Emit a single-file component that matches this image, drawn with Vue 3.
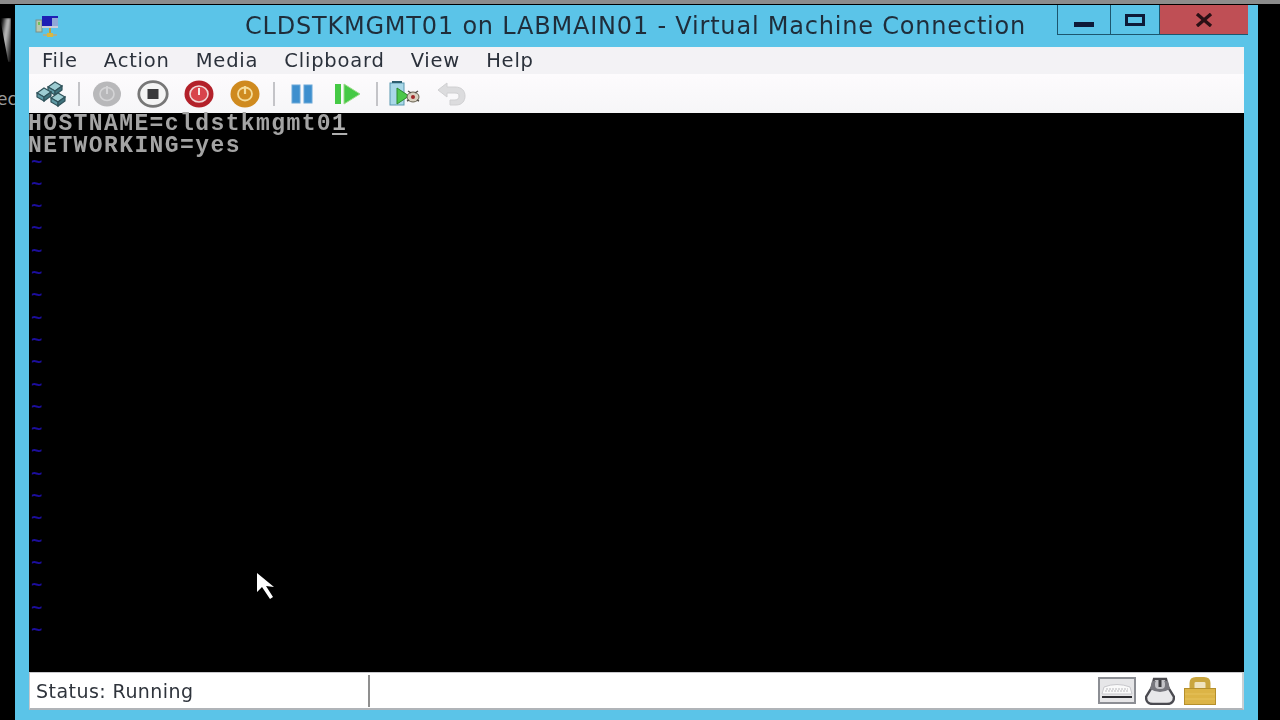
<script setup>
const tildes = Array.from({ length: 22 }, (_, i) => i)
const menus = ['File', 'Action', 'Media', 'Clipboard', 'View', 'Help']
</script>

<template>
  <div class="screen">
    <div class="left-gutter">
      <div class="streak"></div>
      <span class="peek">ec</span>
    </div>
    <div class="window">
      <header class="titlebar">
        <svg class="app-icon" width="28" height="24" viewBox="0 0 28 24">
          <rect x="3" y="5" width="6" height="12" fill="#b9c9b0" stroke="#7d8f86" />
          <rect x="5" y="7" width="2" height="3" fill="#6fbf5f" />
          <rect x="9" y="1" width="16" height="10" fill="#1e1eb4" />
          <rect x="19" y="3" width="6" height="8" fill="#8fa8d8" />
          <rect x="9" y="11" width="16" height="2" fill="#c8ccd8" />
          <rect x="16" y="13" width="2" height="6" fill="#c0a040" />
          <rect x="10" y="19" width="14" height="2" fill="#a8b090" />
          <rect x="14" y="18" width="6" height="4" fill="#d8b840" />
        </svg>
        <h1 class="title">CLDSTKMGMT01 on LABMAIN01 - Virtual Machine Connection</h1>
        <div class="controls">
          <div class="ctl ctl-min"><span class="min-glyph"></span></div>
          <div class="ctl ctl-max"><span class="max-glyph"></span></div>
          <div class="ctl ctl-close">
            <svg width="18" height="14" viewBox="0 0 18 14">
              <path d="M2 1 L16 13 M16 1 L2 13" stroke="#2a1015" stroke-width="3.4" fill="none" />
            </svg>
          </div>
        </div>
      </header>

      <nav class="menubar">
        <span v-for="m in menus" :key="m" class="menu-item">{{ m }}</span>
      </nav>

      <div class="toolbar">
        <div class="tool">
          <svg width="34" height="28" viewBox="0 0 34 28">
            <g stroke="#2f525a" stroke-width="1.2" fill="#5f9aa5">
              <path d="M14 7 L21 2 L28 6 L21 11 Z" fill="#9dccd2" />
              <path d="M14 7 L21 11 V15 L14 11 Z" />
              <path d="M28 6 L21 11 V15 L28 10 Z" fill="#3f727c" />
              <path d="M3 13 L10 8 L17 12 L10 17 Z" fill="#9dccd2" />
              <path d="M3 13 L10 17 V21 L3 17 Z" />
              <path d="M17 12 L10 17 V21 L17 16 Z" fill="#3f727c" />
              <path d="M17 18 L24 13 L31 17 L24 22 Z" fill="#9dccd2" />
              <path d="M17 18 L24 22 V26 L17 22 Z" />
              <path d="M31 17 L24 22 V26 L31 21 Z" fill="#3f727c" />
            </g>
          </svg>
        </div>
        <span class="sep"></span>
        <div class="tool">
          <svg width="30" height="26" viewBox="0 0 30 26">
            <ellipse cx="15" cy="13" rx="14" ry="12.5" fill="#b8b8ba" />
            <ellipse cx="15" cy="13" rx="7" ry="6.5" fill="none" stroke="#d4d4d6" stroke-width="1.6" />
            <path d="M15 5 V13" stroke="#d4d4d6" stroke-width="2" />
          </svg>
        </div>
        <div class="tool">
          <svg width="32" height="28" viewBox="0 0 32 28">
            <ellipse cx="16" cy="14" rx="14.2" ry="12.4" fill="#f4f4f4" stroke="#777" stroke-width="2.8" />
            <rect x="10.5" y="9" width="11" height="10" fill="#3a3a3c" />
          </svg>
        </div>
        <div class="tool">
          <svg width="30" height="28" viewBox="0 0 30 28">
            <ellipse cx="15" cy="14" rx="14.5" ry="13.5" fill="#b3212a" />
            <ellipse cx="15" cy="14" rx="9" ry="8" fill="#d8444c" stroke="#f0d8d8" stroke-width="1.6" />
            <path d="M15 8 V15" stroke="#f8eaea" stroke-width="2" />
          </svg>
        </div>
        <div class="tool">
          <svg width="30" height="28" viewBox="0 0 30 28">
            <ellipse cx="15" cy="14" rx="14.5" ry="13.5" fill="#cf8a1f" />
            <ellipse cx="15" cy="14" rx="7" ry="6.5" fill="none" stroke="#f5dc9a" stroke-width="1.8" />
            <path d="M15 6 V14" stroke="#f5dc9a" stroke-width="2.2" />
          </svg>
        </div>
        <span class="sep sep-shift"></span>
        <div class="tool">
          <svg width="22" height="20" viewBox="0 0 22 20">
            <rect x="1" y="1" width="8" height="18" fill="#3e8fce" stroke="#6ba8d8" />
            <rect x="13" y="1" width="8" height="18" fill="#3e8fce" stroke="#6ba8d8" />
          </svg>
        </div>
        <div class="tool">
          <svg width="26" height="22" viewBox="0 0 26 22">
            <rect x="0" y="1" width="6" height="20" fill="#45c945" />
            <path d="M9 1 L25 11 L9 21 Z" fill="#45c945" stroke="#9bdc8a" />
          </svg>
        </div>
        <span class="sep sep-shift"></span>
        <div class="tool">
          <svg width="32" height="26" viewBox="0 0 32 26">
            <rect x="1" y="2" width="14" height="22" fill="#a9d8e8" stroke="#5a98b0" />
            <path d="M3 1 H13" stroke="#2f5f70" stroke-width="2" />
            <path d="M8 7 L20 15 L8 23 Z" fill="#4cc84a" stroke="#2c8a2c" />
            <ellipse cx="24" cy="16" rx="6" ry="5" fill="#d8d0c0" stroke="#66604f" />
            <circle cx="24" cy="16" r="2" fill="#a02828" />
            <path d="M19 10 L22 12 M29 10 L26 12 M18 20 L20 19 M30 20 L28 19" stroke="#55504a" stroke-width="1.4" />
          </svg>
        </div>
        <div class="tool">
          <svg width="30" height="24" viewBox="0 0 30 24">
            <path d="M2 8 L11 1 V5 H19 C26 5 29 9 29 14 C29 19 26 23 20 23 H14 V18 H19 C22 18 23 16 23 14 C23 12 22 11 19 11 H11 V15 Z" fill="#dcdcde" stroke="#d0d0d2" />
          </svg>
        </div>
      </div>

      <main class="console">
        <div class="line">HOSTNAME=cldstkmgmt0<span class="cursor">1</span></div>
        <div class="line line-last">NETWORKING=yes</div>
        <div v-for="t in tildes" :key="t" class="tilde">~</div>
        <svg class="pointer" width="22" height="30" viewBox="0 0 22 30">
          <path d="M1 1 V20 L6 15 L14 27 L17 25 L10 14 L18 15 Z" fill="#fff" />
        </svg>
      </main>

      <footer class="statusbar">
        <div class="status-text">Status: Running</div>
        <div class="indicators">
          <svg width="38" height="27" viewBox="0 0 38 27">
            <rect x="1" y="1" width="36" height="25" fill="#e6e6e8" stroke="#8c8e94" stroke-width="2" />
            <path d="M6 10 Q19 5 32 10 L34 17 H4 Z" fill="#fafafa" stroke="#c8c8cc" />
            <path d="M8 12 H30 M7 14 H31" stroke="#b8b8bc" stroke-dasharray="2 1" />
            <path d="M4 20 H34" stroke="#2c2c30" stroke-width="2" />
          </svg>
          <svg width="30" height="28" viewBox="0 0 30 28">
            <path d="M9 2 H21 L23 10 L29 20 Q29 27 22 27 H8 Q1 27 1 20 L7 10 Z" fill="#e8e8ea" stroke="#4a4a50" stroke-width="2.4" />
            <path d="M7 4 H23 L25 12 Q15 18 5 12 Z" fill="#77777d" />
            <rect x="10" y="3" width="10" height="9" rx="4" fill="#c4c4c8" />
            <rect x="13.5" y="3" width="3" height="7" fill="#3c3c40" />
          </svg>
          <svg width="32" height="28" viewBox="0 0 32 28">
            <path d="M8 14 V6 Q8 2.5 12 2.5 H20 Q24 2.5 24 6 V14" fill="#efe3bf" stroke="#c9a53e" stroke-width="5" />
            <rect x="0.5" y="11.5" width="31" height="16" fill="#dcb446" stroke="#b58f2c" />
            <path d="M1 17 H31 M1 22 H31" stroke="#e6c25c" />
          </svg>
        </div>
      </footer>
    </div>
  </div>
</template>

<style>
html, body { margin: 0; background: #000; overflow: hidden; }
</style>

<style scoped>
.screen {
  width: 1280px;
  height: 720px;
  background: #000;
  display: flex;
  box-sizing: border-box;
  border-top: 4px solid #8c8c8c;
  overflow: hidden;
  font-family: "DejaVu Sans", "Noto Sans", sans-serif;
}
.left-gutter {
  width: 15px;
  flex: none;
  display: flex;
  flex-direction: column;
}
.streak {
  width: 11px;
  height: 44px;
  margin-top: 14px;
  background: linear-gradient(100deg, #000 10%, #c8c8c8 45%, #555 75%, #000 100%);
  clip-path: polygon(0 0, 100% 0, 100% 100%, 75% 100%);
  filter: blur(1px);
}
.peek {
  margin-top: 25px;
  margin-left: -3px;
  font-size: 17px;
  line-height: 24px;
  color: #9a9a9a;
}
.window {
  width: 1243px;
  flex: none;
  margin-top: 1px;
  background: #5bc4e8;
  display: flex;
  flex-direction: column;
  filter: blur(0.5px);
  box-sizing: border-box;
  padding-right: 14px;
}
.titlebar {
  height: 42px;
  flex: none;
  display: flex;
  align-items: flex-start;
  margin-right: -4px;
  padding-left: 18px;
}
.app-icon {
  flex: none;
  margin-top: 10px;
}
.title {
  margin: 6px 0 0;
  flex: 1;
  font-size: 24px;
  letter-spacing: 0.8px;
  line-height: 30px;
  font-weight: 400;
  color: #1f2d3a;
  text-align: center;
  padding-left: 153px;
  white-space: nowrap;
}
.controls {
  display: flex;
  flex: none;
  height: 29px;
  border-bottom: 1px solid #1c566e;
}
.ctl {
  display: flex;
  align-items: center;
  justify-content: center;
  box-sizing: border-box;
}
.ctl-min { width: 54px; border-left: 1px solid #1c566e; border-right: 1px solid #1c566e; }
.ctl-max { width: 49px; border-right: 1px solid #1c566e; }
.ctl-close { width: 88px; background: #bf4f55; }
.min-glyph { width: 20px; height: 5px; background: #0d1a38; margin-top: 9px; }
.max-glyph { width: 20px; height: 12px; border: 3px solid #0d1a38; box-sizing: border-box; }
.menubar {
  height: 27px;
  flex: none;
  margin-left: 14px;
  padding-left: 13px;
  display: flex;
  gap: 26px;
  align-items: center;
  background: #f3f2f5;
}
.menu-item {
  font-size: 19.5px;
  letter-spacing: 0.8px;
  line-height: 27px;
  color: #2b313b;
}
.toolbar {
  height: 39px;
  flex: none;
  margin-left: 14px;
  padding-left: 2px;
  display: flex;
  gap: 6px;
  align-items: center;
  background: linear-gradient(#fdfbfd, #f6f6f8);
}
.tool {
  width: 40px;
  flex: none;
  display: flex;
  align-items: center;
  justify-content: center;
}
.sep {
  width: 4px;
  flex: none;
  height: 24px;
  background: linear-gradient(#c4c4c8, #c4c4c8) center / 2px 100% no-repeat;
}
.sep-shift { margin-left: 1px; }
.console {
  position: relative;
  flex: 1;
  min-height: 0;
  margin-left: 14px;
  background: #000;
  font-family: "Liberation Mono", monospace;
  font-size: 23px;
  letter-spacing: 1.4px;
  color: #a4a4a4;
}
.line {
  height: 22.3px;
  line-height: 23px;
  white-space: pre;
  font-weight: 700;
  margin-left: -1px;
}
.line-last { height: 16.3px; }
.cursor { text-decoration: underline; text-underline-offset: 3px; color: #b0b0b0; }
.tilde {
  height: 22.3px;
  line-height: 22.3px;
  font-size: 19px;
  font-weight: 700;
  letter-spacing: 0;
  color: #1c0e9e;
  padding-left: 2px;
}
.pointer {
  position: absolute;
  left: 227px;
  top: 459px;
}
.statusbar {
  height: 38px;
  flex: none;
  margin-left: 14px;
  margin-bottom: 10px;
  box-sizing: border-box;
  background: #fff;
  border-top: 1px solid #c8c8cc;
  border-bottom: 2px solid #b0b4b8;
  border-left: 1px solid #c8c8cc;
  border-right: 2px solid #c8d0d4;
  display: flex;
  align-items: center;
}
.status-text {
  width: 340px;
  height: 32px;
  flex: none;
  padding-left: 6px;
  box-sizing: border-box;
  font-size: 19px;
  letter-spacing: 0.45px;
  line-height: 32px;
  color: #2f343c;
  border-right: 2px solid #8f8f8f;
}
.indicators {
  flex: 1;
  display: flex;
  justify-content: flex-end;
  align-items: center;
  gap: 9px;
  padding-right: 26px;
}
</style>
